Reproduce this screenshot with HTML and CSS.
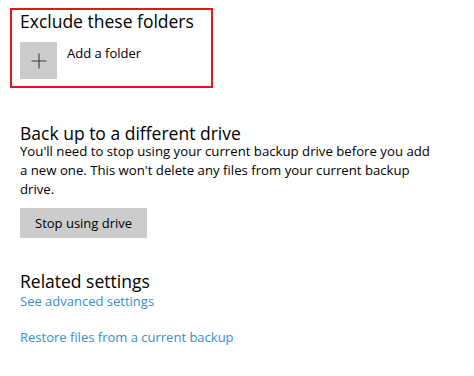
FILE: index.html
```html
<!DOCTYPE html>
<html lang="en">
<head>
    <meta charset="UTF-8">
    <meta name="viewport" content="width=device-width, initial-scale=1.0">
    <title>Backup options</title>
    <link rel="stylesheet" href="styles.css">
</head>
<body>
    <div class="page">
        <div class="exclude">
            <h2 class="title">Exclude these folders</h2>
            <div class="add-row">
                <div class="add-tile">
                    <svg width="16" height="16" viewBox="0 0 16 16">
                        <path d="M8 0.5 V15.5 M0.5 8 H15.5" stroke="#3a3a3a" stroke-width="1.1" fill="none"/>
                    </svg>
                </div>
                <span class="add-label">Add a folder</span>
            </div>
        </div>

        <div class="section drive">
            <h2 class="title">Back up to a different drive</h2>
            <p class="desc">You'll need to stop using your current backup drive before you add a new one. This won't delete any files from your current backup drive.</p>
            <button class="btn" type="button">Stop using drive</button>
        </div>

        <div class="section related">
            <h2 class="title">Related settings</h2>
            <a class="link" href="#">See advanced settings</a>
            <a class="link restore" href="#">Restore files from a current backup</a>
        </div>
    </div>
</body>
</html>
```

FILE: styles.css
```css
body {
    font-family: "Open Sans", "Noto Sans", sans-serif;
    margin: 0;
    padding: 0;
    background-color: #fff;
    color: #000;
}

.page {
    padding: 8px 0 0 10px;
}

.exclude {
    width: 203px;
    height: 80px;
    box-sizing: border-box;
    border: 2px solid #e3161c;
    padding: 0 8px;
}

.title {
    font-size: 17.5px;
    font-weight: normal;
    line-height: 18px;
    margin: 0;
}

.exclude .title {
    margin-top: 2px;
}

.add-row {
    display: flex;
    align-items: flex-start;
    gap: 10px;
    margin-top: 12px;
}

.add-tile {
    width: 37px;
    height: 37px;
    background-color: #cccccc;
    display: flex;
    justify-content: center;
    align-items: center;
}

.add-label {
    font-size: 13px;
    line-height: 18px;
    margin-top: 2px;
}

.section {
    padding-left: 10px;
}

.drive {
    margin-top: 36px;
}

.desc {
    font-size: 13.2px;
    line-height: 19px;
    margin: 0;
    width: 414px;
}

.btn {
    display: block;
    margin-top: 9px;
    background-color: #cccccc;
    border: none;
    padding: 0 15px;
    height: 30px;
    font-family: "Open Sans", "Noto Sans", sans-serif;
    font-size: 13px;
    color: #000;
}

.related {
    margin-top: 34px;
}

.related .title {
    margin-bottom: 2px;
}

.link {
    display: block;
    font-size: 13px;
    line-height: 19px;
    color: #368dd0;
    text-decoration: none;
}

.link:hover {
    text-decoration: underline;
}

.restore {
    margin-top: 17px;
}
```
